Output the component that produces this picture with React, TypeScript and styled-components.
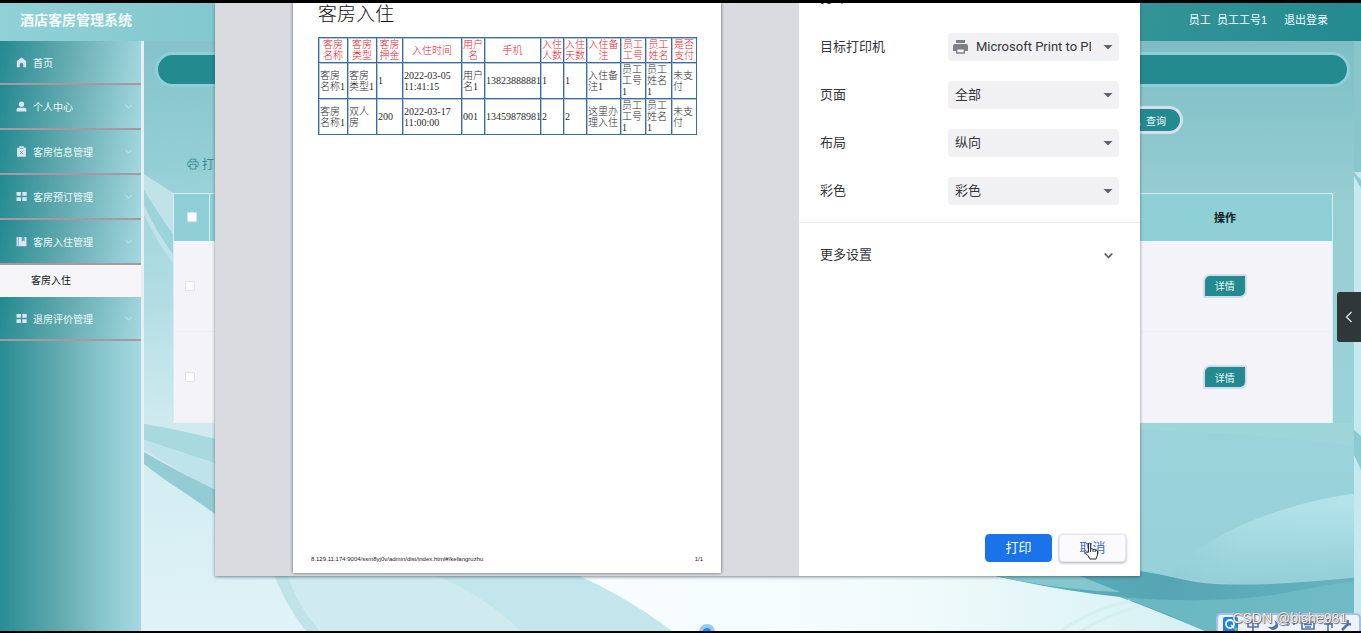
import React from "react";
import styled, { createGlobalStyle, css } from "styled-components";

const sans = `"Noto Sans", "Noto Sans CJK SC", sans-serif`;

const GlobalStyle = createGlobalStyle`
  * { box-sizing: border-box; }
  body { margin: 0; background: #000; font-family: "Liberation Sans", "Noto Sans CJK SC", sans-serif; }
  button, input, select { font-family: inherit; margin: 0; }
  h1, h2, ul { margin: 0; padding: 0; }
`;

const Screen = styled.div`
  position: relative;
  display: flex;
  flex-direction: column;
  min-height: 100vh;
  border-top: 3px solid #000;
  border-bottom: 2px solid #000;
  overflow: hidden;
`;

/* ---------- admin page ---------- */

const Header = styled.header`
  display: flex;
  align-items: center;
  justify-content: space-between;
  height: 38px;
  padding: 0 33px 4px 20px;
  color: #f4fbfc;
  background: linear-gradient(100deg, #90d1d7 0%, #7fc6cc 20%, #359598 82%, #238a8f 100%);
`;

const Brand = styled.h1`
  font-size: 14px;
  line-height: 20px;
  font-weight: 700;
`;

const HeaderLinks = styled.nav`
  display: flex;
  gap: 17px;
  font-size: 11px;
  line-height: 16px;
  a { color: inherit; text-decoration: none; }
`;

const Body = styled.div`
  display: flex;
  flex: 1;
`;

const Sidebar = styled.nav`
  flex: 0 0 144px;
  border-right: 3px solid #ecedf3;
  background: linear-gradient(90deg, #278d93 0%, #68adb2 46%, #8ac8ce 74%, #a3d9df 100%);
`;

const Menu = styled.ul`
  list-style: none;
`;

const MenuItem = styled.li`
  border-bottom: 2px solid #a898a4;
  height: 45px;
  background: linear-gradient(100deg, #238a90 0%, #68adb2 50%, #a3d9df 100%);
  &:first-child, &:last-child { height: 44px; }
`;

const MenuLink = styled.a`
  display: flex;
  align-items: center;
  gap: 6px;
  height: 100%;
  padding: 0 8px 0 16px;
  color: #eefafb;
  font-size: 10px;
  text-decoration: none;
  span { flex: 1; }
`;

const SubItem = styled.li`
  a {
    display: block;
    padding-left: 31px;
    font-size: 10px;
    line-height: 32px;
    color: #111;
    background: #f5f5f8;
    text-decoration: none;
  }
`;

const Main = styled.main`
  position: relative;
  flex: 1;
  min-width: 0;
  padding-right: 7px;
`;

const Backdrop = styled.svg`
  position: absolute;
  inset: 0;
  width: 100%;
  height: 100%;
`;

const Content = styled.div`
  position: relative;
`;

const Banner = styled.div`
  height: 35px;
  margin: 11px 4px 0 11px;
  border: 3px solid #8fd0d8;
  border-radius: 18px;
  background: #238a8f;
`;

const Filters = styled.form`
  display: flex;
  justify-content: flex-end;
  margin-top: 19px;
  padding-right: 171px;
`;

const QueryButton = styled.button`
  display: flex;
  align-items: center;
  gap: 5px;
  height: 28px;
  padding: 0 14px;
  border: 3px solid #d8def0;
  border-radius: 14px;
  background: #238a8f;
  color: #f2fbfc;
  font-size: 10px;
`;

const Tools = styled.div`
  display: flex;
  align-items: center;
  height: 59px;
  padding-left: 43px;
`;

const PrintTool = styled.button`
  display: flex;
  align-items: center;
  gap: 3px;
  padding: 0;
  border: 0;
  background: none;
  color: #3a8a90;
  font-size: 12px;
`;

const TableWrap = styled.div`
  margin: 0 21px 0 29px;
`;

const DataTable = styled.table`
  width: 100%;
  border-collapse: collapse;
  table-layout: fixed;
  border: 1px solid #d5edf2;
  font-size: 10px;
  th { height: 47px; padding: 0; background: #8fd0d7; border-right: 1px solid #d5edf2; color: #0b1c22; font-size: 11px; }
  td { height: 91px; padding: 0; background: #f4f4f8; border-bottom: 1px solid #eeeef3; text-align: center; }
  td:first-child { padding-right: 3px; }
`;

const Check = styled.input`
  appearance: none;
  display: block;
  width: 10px;
  height: 10px;
  margin: 0 auto;
  border: 1px solid #dfe2e8;
  border-radius: 1px;
  background: #fff;
`;

const DetailButton = styled.button`
  height: 24px;
  padding: 0 10px;
  border: 2px solid #d3dcee;
  border-radius: 7px 2px 7px 2px;
  background: #238a8f;
  color: #f0fafb;
  font-size: 10px;
`;

/* ---------- print dialog ---------- */

const Overlay = styled.div`
  position: absolute;
  inset: 0 6px 55px 0;
  display: flex;
  justify-content: center;
`;

const Dialog = styled.section`
  display: flex;
  width: calc(100% - 430px);
  min-width: 800px;
  background: #fff;
  box-shadow: 0 1px 3px rgba(40, 60, 70, 0.6);
  overflow: hidden;
`;

const Preview = styled.div`
  flex: 1;
  display: flex;
  justify-content: center;
  padding-bottom: 3px;
  background: #dadae1;
`;

const Paper = styled.article`
  display: flex;
  flex-direction: column;
  width: 428px;
  padding: 0 25px 9px;
  background: #fff;
  box-shadow: 0 0 3px rgba(50, 50, 60, 0.8);
`;

const PaperTitle = styled.h2`
  font-size: 19px;
  line-height: 24px;
  font-weight: 300;
  color: #111;
`;

const PrintTable = styled.table`
  width: 378px;
  margin-top: 10px;
  table-layout: fixed;
  border-collapse: collapse;
  font-family: "Liberation Serif", "Noto Sans CJK SC", serif;
  font-size: 10px;
  line-height: 11px;
  color: #28282c;
  th, td { border: 1px solid #3a6ea5; outline: 1px solid rgba(58, 110, 165, 0.4); outline-offset: -1px; padding: 0; font-weight: 300; }
  th { height: 25px; color: #e81828; text-align: center; }
  td { height: 36px; padding-left: 1px; text-align: left; }
`;

const PaperFooter = styled.footer`
  display: flex;
  justify-content: space-between;
  margin: auto -7px 0;
  font-size: 6px;
  line-height: 10px;
  color: #222;
`;

const Settings = styled.form`
  flex: 0 0 341px;
  display: flex;
  flex-direction: column;
  color: #333539;
  font-family: ${sans};
  font-size: 13px;
`;

const PanelTitle = styled.h2`
  height: 30px;
  margin-top: -16px;
  padding-left: 21px;
  font-size: 14px;
  line-height: 20px;
  font-weight: 400;
`;

const Fields = styled.div`
  display: grid;
  gap: 20px;
  padding: 16px 21px 17px;
  border-bottom: 1px solid #ededf1;
`;

const Field = styled.div`
  display: grid;
  grid-template-columns: 1fr 171px;
  align-items: center;
  label { padding-bottom: 4px; }
`;

const SelectBox = styled.div`
  position: relative;
`;

const Select = styled.select<{ $icon?: boolean }>`
  appearance: none;
  display: block;
  width: 100%;
  height: 28px;
  padding: 0 28px 2px 7px;
  border: 0;
  border-radius: 4px;
  background: #f1f1f4;
  color: #333539;
  font-size: 13px;
  ${(p) => p.$icon && css`padding-left: 28px; font-family: Roboto, sans-serif; text-overflow: clip;`}
`;

const Arrow = styled.svg`
  position: absolute;
  right: 6px;
  top: 12px;
  pointer-events: none;
`;

const PrinterMark = styled.svg`
  position: absolute;
  left: 4px;
  top: 6px;
  pointer-events: none;
`;

const MoreButton = styled.button`
  display: flex;
  align-items: center;
  justify-content: space-between;
  height: 64px;
  padding: 0 26px 0 21px;
  border: 0;
  background: none;
  color: inherit;
  font-size: 13px;
  span { padding-bottom: 3px; }
`;

const Actions = styled.div`
  display: flex;
  justify-content: flex-end;
  gap: 7px;
  margin-top: auto;
  padding: 14px;
`;

const ActionButton = styled.button<{ $primary?: boolean }>`
  width: 67px;
  height: 28px;
  padding: 0 0 3px;
  border: 1px solid #e6e6f0;
  border-radius: 4px;
  background: #fbfbff;
  color: #3d6fc4;
  font-size: 13px;
  box-shadow: 0 1px 3px rgba(60, 64, 90, 0.45);
  ${(p) => p.$primary && css`border-color: #1a73e8; background: #1a73e8; color: #fff; box-shadow: none;`}
`;

/* ---------- floating pieces ---------- */

const Pointer = styled.svg`
  position: absolute;
  left: 1084px;
  top: 538px;
`;

const DrawerTab = styled.button`
  position: absolute;
  right: 0;
  top: 289px;
  width: 24px;
  height: 50px;
  padding: 0;
  border: 0;
  border-radius: 3px 0 0 3px;
  background: #2f3738;
  svg { display: block; margin: 0 auto; }
`;

const ImeBar = styled.div`
  position: absolute;
  right: 0;
  bottom: 0;
  width: 145px;
  height: 18px;
  border: 2px solid #a9bfe6;
  border-bottom: 0;
  border-radius: 5px 5px 0 0;
  background: #eef3fb;
  overflow: hidden;
`;

const Watermark = styled.div`
  position: absolute;
  right: 14px;
  bottom: 5px;
  font-size: 14px;
  line-height: 16px;
  color: #f3f3f5;
  text-shadow: 0 0 1px #555, 1px 1px 1px #666;
`;

const Bubble = styled.div`
  position: absolute;
  left: 52%;
  bottom: -9px;
  width: 16px;
  height: 16px;
  margin-left: -9px;
  border: 4px solid #8fcbf5;
  border-radius: 50%;
  background: #1292f5;
`;

type IconName = "home" | "user" | "clip" | "grid" | "book";

const shapes: Record<IconName, React.ReactNode> = {
  home: <path d="M5 0.5L0.8 3.6V9.3H3.4V6.8Q3.6 5.4 5 5.3Q6.4 5.4 6.6 6.8V9.3H9.2V3.6Z" />,
  user: <path d="M5 0.5a2.4 2.4 0 1 1 0 4.8a2.4 2.4 0 0 1 0-4.8ZM0.5 9.5V8.2Q0.5 6.2 2.6 6.2H7.4Q9.5 6.2 9.5 8.2V9.5Z" />,
  clip: (
    <>
      <path d="M1 1.5H3V0.2H7V1.5H9V9.8H1Z" />
      <path d="M3.4 4.4L6.6 7.4M6.6 4.4L3.4 7.4M3.4 2.3H6.6" stroke="#59a4aa" strokeWidth="0.7" />
    </>
  ),
  grid: <path d="M0.5 0.8H4.5V4.4H0.5ZM5.7 0.8H9.7V4.4H5.7ZM0.5 5.6H4.5V9.2H0.5ZM5.7 5.6H9.7V9.2H5.7Z" />,
  book: (
    <>
      <path d="M0.5 0.8H1.7V9.4H0.5ZM2.2 0.8H9.5V9.4H2.2Z" />
      <path d="M5.2 0.8V5L6.5 4L7.8 5V0.8Z" fill="#59a4aa" />
    </>
  ),
};

const MenuIcon = ({ name }: { name: IconName }) => (
  <svg width="11" height="11" viewBox="0 0 10 10" fill="#dfe4f5" aria-hidden="true">{shapes[name]}</svg>
);

const Chevron = ({ size, color, width = 1 }: { size: number; color: string; width?: number }) => (
  <svg width={size} height={size} viewBox="0 0 10 10" fill="none" stroke={color} strokeWidth={width} aria-hidden="true">
    <path d="M1.5 3.2L5 6.7L8.5 3.2" />
  </svg>
);

const Waves = () => (
  <Backdrop viewBox="144 41 1217 590" preserveAspectRatio="none" aria-hidden="true">
    <defs>
      <linearGradient id="leftSky" x1="0" y1="0" x2="0.1" y2="1">
        <stop offset="0" stopColor="#86c2cc" />
        <stop offset="0.2" stopColor="#93ced5" />
        <stop offset="0.45" stopColor="#b4dfe5" />
        <stop offset="0.65" stopColor="#d0ebf0" />
        <stop offset="1" stopColor="#e0f3f8" />
      </linearGradient>
      <linearGradient id="rightSky" x1="0" y1="0" x2="0" y2="1">
        <stop offset="0" stopColor="#7fbdc6" />
        <stop offset="0.12" stopColor="#88c5cb" />
        <stop offset="0.28" stopColor="#97ced2" />
        <stop offset="0.7" stopColor="#9ad3da" />
        <stop offset="1" stopColor="#96d0d8" />
      </linearGradient>
      <linearGradient id="glow" x1="0" y1="0" x2="1" y2="0">
        <stop offset="0" stopColor="#b5e4ea" stopOpacity="0" />
        <stop offset="0.35" stopColor="#b5e4ea" stopOpacity="0.7" />
        <stop offset="1" stopColor="#b5e4ea" />
      </linearGradient>
      <linearGradient id="glowShade" x1="0" y1="0" x2="0.2" y2="1">
        <stop offset="0.3" stopColor="#92ced6" stopOpacity="0" />
        <stop offset="1" stopColor="#92ced6" stopOpacity="0.9" />
      </linearGradient>
      <linearGradient id="floor" x1="0" y1="0" x2="1" y2="0">
        <stop offset="0" stopColor="#f8fdff" />
        <stop offset="0.5" stopColor="#f2fbfc" />
        <stop offset="1" stopColor="#d2eff3" />
      </linearGradient>
      <linearGradient id="ribbon" x1="0" y1="0" x2="1" y2="0">
        <stop offset="0" stopColor="#5fb0bb" />
        <stop offset="0.5" stopColor="#56a5b4" />
        <stop offset="1" stopColor="#67b3bf" />
      </linearGradient>
    </defs>
    <rect x="144" y="41" width="1217" height="590" fill="url(#leftSky)" />
    <path d="M144 174C158 184 175 192 188 205L220 250V320C190 290 160 250 144 215Z" fill="#bfe3e9" />
    <path d="M144 190C165 225 190 260 220 290V305C185 275 160 240 144 205Z" fill="#8fccd3" opacity="0.7" />
    <path d="M144 212C160 245 180 275 200 300L144 320Z" fill="#aedde3" opacity="0.35" />
    <path d="M144 424C170 428 195 434 220 440V465C195 457 170 448 144 440Z" fill="#a8d9df" />
    <path d="M144 440C170 448 195 457 220 465V494C195 480 170 465 144 450Z" fill="#bfe3ea" />
    <path d="M144 452C170 467 195 480 220 492V518C195 498 170 485 144 464Z" fill="#93cdd3" />
    <path d="M272 570H570Q630 592 675 631H306Q286 606 272 570Z" fill="#cfebf0" />
    <path d="M272 570H286Q296 605 320 631H306Q286 606 272 570Z" fill="#bfe3e9" />
    <path d="M420 570H570Q630 592 675 631H520Q480 590 420 570Z" fill="#c3e6ec" />
    <path d="M565 570H1140L1230 631H672Q620 592 565 570Z" fill="url(#floor)" />
    <path d="M1120 41H1361V631H1210L1120 595Z" fill="url(#rightSky)" />
    <path d="M1136 430Q1240 432 1354 446V423H1136Z" fill="#9fd5d8" opacity="0.7" />
    <path d="M1170 575C1200 535 1290 500 1361 493V580C1300 586 1230 590 1170 575Z" fill="url(#glow)" />
    <path d="M1170 575C1200 535 1290 500 1361 493V580C1300 586 1230 590 1170 575Z" fill="url(#glowShade)" />
    <path d="M970 570L1140 571C1165 574 1190 583 1215 584C1265 586 1310 582 1361 577V631H1205Q1160 612 1120 597Q1050 590 970 570Z" fill="url(#ribbon)" />
    <path d="M1120 597C1180 602 1240 602 1290 592Q1325 585 1361 580V631H1205Q1160 610 1120 597Z" fill="#73bdc7" opacity="0.75" />
    <path d="M970 570L1080 576L1120 592Q1050 590 970 570Z" fill="#84c8cd" />
    <path d="M1060 631Q1100 606 1130 601M1080 631Q1110 614 1140 606" stroke="#d5eff3" strokeWidth="3" fill="none" />
    <rect x="1354" y="41" width="7" height="134" fill="#8bc5cc" />
    <rect x="1354" y="172" width="7" height="459" fill="#c6e8ef" />
    <path d="M1354 172L1361 180V188L1354 176ZM1354 430L1361 436V470L1354 455Z" fill="#8ccbd0" />
  </Backdrop>
);

const menu: { icon: IconName; label: string; open?: boolean; plain?: boolean }[] = [
  { icon: "home", label: "首页", plain: true },
  { icon: "user", label: "个人中心" },
  { icon: "clip", label: "客房信息管理" },
  { icon: "grid", label: "客房预订管理" },
  { icon: "book", label: "客房入住管理", open: true },
  { icon: "grid", label: "退房评价管理" },
];

const columns: [string, number][] = [
  ["客房名称", 29], ["客房类型", 29], ["客房押金", 26], ["入住时间", 59], ["用户名", 23], ["手机", 56],
  ["入住人数", 23], ["入住天数", 23], ["入住备注", 34], ["员工工号", 25], ["员工姓名", 26], ["是否支付", 25],
];

const records = [
  ["客房名称1", "客房类型1", "1", "2022-03-05 11:41:15", "用户名1", "13823888881", "1", "1", "入住备注1", "员工工号1", "员工姓名1", "未支付"],
  ["客房名称1", "双人房", "200", "2022-03-17 11:00:00", "001", "13459878981", "2", "2", "这里办理入住", "员工工号1", "员工姓名1", "未支付"],
];

const options = [
  { id: "printer", label: "目标打印机", value: "Microsoft Print to PDF", icon: true },
  { id: "pages", label: "页面", value: "全部" },
  { id: "layout", label: "布局", value: "纵向" },
  { id: "color", label: "彩色", value: "彩色" },
];

export default function App() {
  return (
    <Screen>
      <GlobalStyle />
      <Header>
        <Brand>酒店客房管理系统</Brand>
        <HeaderLinks>
          <span>员工&nbsp; 员工工号1</span>
          <a href="#logout">退出登录</a>
        </HeaderLinks>
      </Header>
      <Body>
        <Sidebar>
          <Menu>
            {menu.map((m) => (
              <React.Fragment key={m.label}>
                <MenuItem>
                  <MenuLink href="#menu">
                    <MenuIcon name={m.icon} />
                    <span>{m.label}</span>
                    {!m.plain && <Chevron size={9} color="#cdeaf4" />}
                  </MenuLink>
                </MenuItem>
                {m.open && <SubItem><a href="#kefangruzhu">客房入住</a></SubItem>}
              </React.Fragment>
            ))}
          </Menu>
        </Sidebar>
        <Main>
          <Waves />
          <Content>
            <Banner />
            <Filters>
              <QueryButton type="button">
                <svg width="10" height="10" viewBox="0 0 10 10" fill="none" stroke="currentColor" aria-hidden="true">
                  <circle cx="4.5" cy="4.5" r="3.5" /><path d="M7 7L9.5 9.5" />
                </svg>
                查询
              </QueryButton>
            </Filters>
            <Tools>
              <PrintTool type="button">
                <svg width="12" height="12" viewBox="0 0 12 12" fill="none" stroke="currentColor" strokeWidth="0.9" aria-hidden="true">
                  <path d="M3.2 3.8V1.2H8.8V3.8M3.2 8.5H2A1.2 1.2 0 0 1 .8 7.3V5A1.2 1.2 0 0 1 2 3.8H10A1.2 1.2 0 0 1 11.2 5V7.3A1.2 1.2 0 0 1 10 8.5H8.8M3.2 6.3H8.8V11H3.2Z" />
                </svg>
                打印
              </PrintTool>
            </Tools>
            <TableWrap>
              <DataTable>
                <colgroup><col style={{ width: 36 }} /><col /><col style={{ width: 215 }} /></colgroup>
                <thead>
                  <tr><th><Check type="checkbox" aria-label="全选" /></th><th /><th>操作</th></tr>
                </thead>
                <tbody>
                  {records.map((r, i) => (
                    <tr key={i}>
                      <td><Check type="checkbox" aria-label={r[0]} /></td>
                      <td />
                      <td><DetailButton type="button">详情</DetailButton></td>
                    </tr>
                  ))}
                </tbody>
              </DataTable>
            </TableWrap>
          </Content>
        </Main>
      </Body>

      <Overlay>
        <Dialog role="dialog" aria-label="打印">
          <Preview>
            <Paper>
              <PaperTitle>客房入住</PaperTitle>
              <PrintTable>
                <colgroup>{columns.map(([name, w]) => <col key={name} style={{ width: w }} />)}</colgroup>
                <thead><tr>{columns.map(([name]) => <th key={name}>{name}</th>)}</tr></thead>
                <tbody>
                  {records.map((r, i) => <tr key={i}>{r.map((c, j) => <td key={j}>{c}</td>)}</tr>)}
                </tbody>
              </PrintTable>
              <PaperFooter>
                <span>8.129.11.174:9004/ssm8yj0v/admin/dist/index.html#/kefangruzhu</span>
                <span>1/1</span>
              </PaperFooter>
            </Paper>
          </Preview>
          <Settings>
            <PanelTitle>打印</PanelTitle>
            <Fields>
              {options.map((o) => (
                <Field key={o.id}>
                  <label htmlFor={o.id}>{o.label}</label>
                  <SelectBox>
                    <Select id={o.id} $icon={o.icon}><option>{o.value}</option></Select>
                    {o.icon && (
                      <PrinterMark width="17" height="16" viewBox="0 0 17 16" fill="#7d8086" aria-hidden="true">
                        <path d="M4 1H13V4H4ZM3 5H14A2 2 0 0 1 16 7V12H13V9H4V12H1V7A2 2 0 0 1 3 5Z" />
                        <path d="M4.7 9.7H12.3V14H4.7Z" fill="#f5f5f8" stroke="#7d8086" strokeWidth="1.4" />
                      </PrinterMark>
                    )}
                    <Arrow width="10" height="5" viewBox="0 0 10 5" fill="#5f6368" aria-hidden="true"><path d="M0.5 0H9.5L5 4.6Z" /></Arrow>
                  </SelectBox>
                </Field>
              ))}
            </Fields>
            <MoreButton type="button">
              <span>更多设置</span>
              <Chevron size={11} color="#55585c" width={1.5} />
            </MoreButton>
            <Actions>
              <ActionButton type="button" $primary>打印</ActionButton>
              <ActionButton type="button">取消</ActionButton>
            </Actions>
          </Settings>
        </Dialog>
      </Overlay>

      <Pointer width="18" height="20" viewBox="0 0 18 20" aria-hidden="true">
        <path d="M4.5 2.5Q5.8 1.4 6.6 3V8Q8 7 9 8.4Q10.4 7.6 11.2 9Q13.2 8.6 13.6 10.6Q14 14 12 18H6Q4.4 14.6 1.6 12.2Q1.4 10 4.4 11.4Z" fill="#fff" stroke="#23252e" />
        <path d="M6.6 8V11M9 8.6V11M11.2 9.2V11" stroke="#23252e" />
      </Pointer>

      <DrawerTab type="button" aria-label="展开">
        <svg width="8" height="12" viewBox="0 0 8 12" fill="none" stroke="#e8eded" strokeWidth="1.2"><path d="M6.5 1L1.5 6L6.5 11" /></svg>
      </DrawerTab>

      <Bubble />
      <ImeBar>
        <svg width="141" height="16" viewBox="0 0 141 16" fill="none" stroke="#4d75ad" strokeWidth="1.6" aria-hidden="true">
          <rect x="5" y="2" width="15" height="15" rx="2" fill="#1c82f0" stroke="none" />
          <circle cx="12" cy="9" r="4" stroke="#fff" strokeWidth="1.8" />
          <path d="M13 10L16 13" stroke="#fff" />
          <circle cx="18" cy="14" r="1.6" fill="#7bd34a" stroke="none" />
          <path d="M30 7H40V12H30ZM35 4V16" />
          <path d="M56 5Q61 12 50 12Q56 18 60 12Q61 8 56 5Z" fill="#4d75ad" stroke="none" />
          <circle cx="70" cy="9" r="1.4" strokeWidth="1" /><path d="M76 6V10" />
          <path d="M84 7H96V14H84ZM86 9.5H94M87 12H93" />
          <path d="M110 4V16M106 9H114M114 8V13" />
          <path d="M124 15L131 8M130 5Q128 10 133 9" strokeWidth="2.6" />
        </svg>
      </ImeBar>
      <Watermark>CSDN @bishe981</Watermark>
    </Screen>
  );
}
